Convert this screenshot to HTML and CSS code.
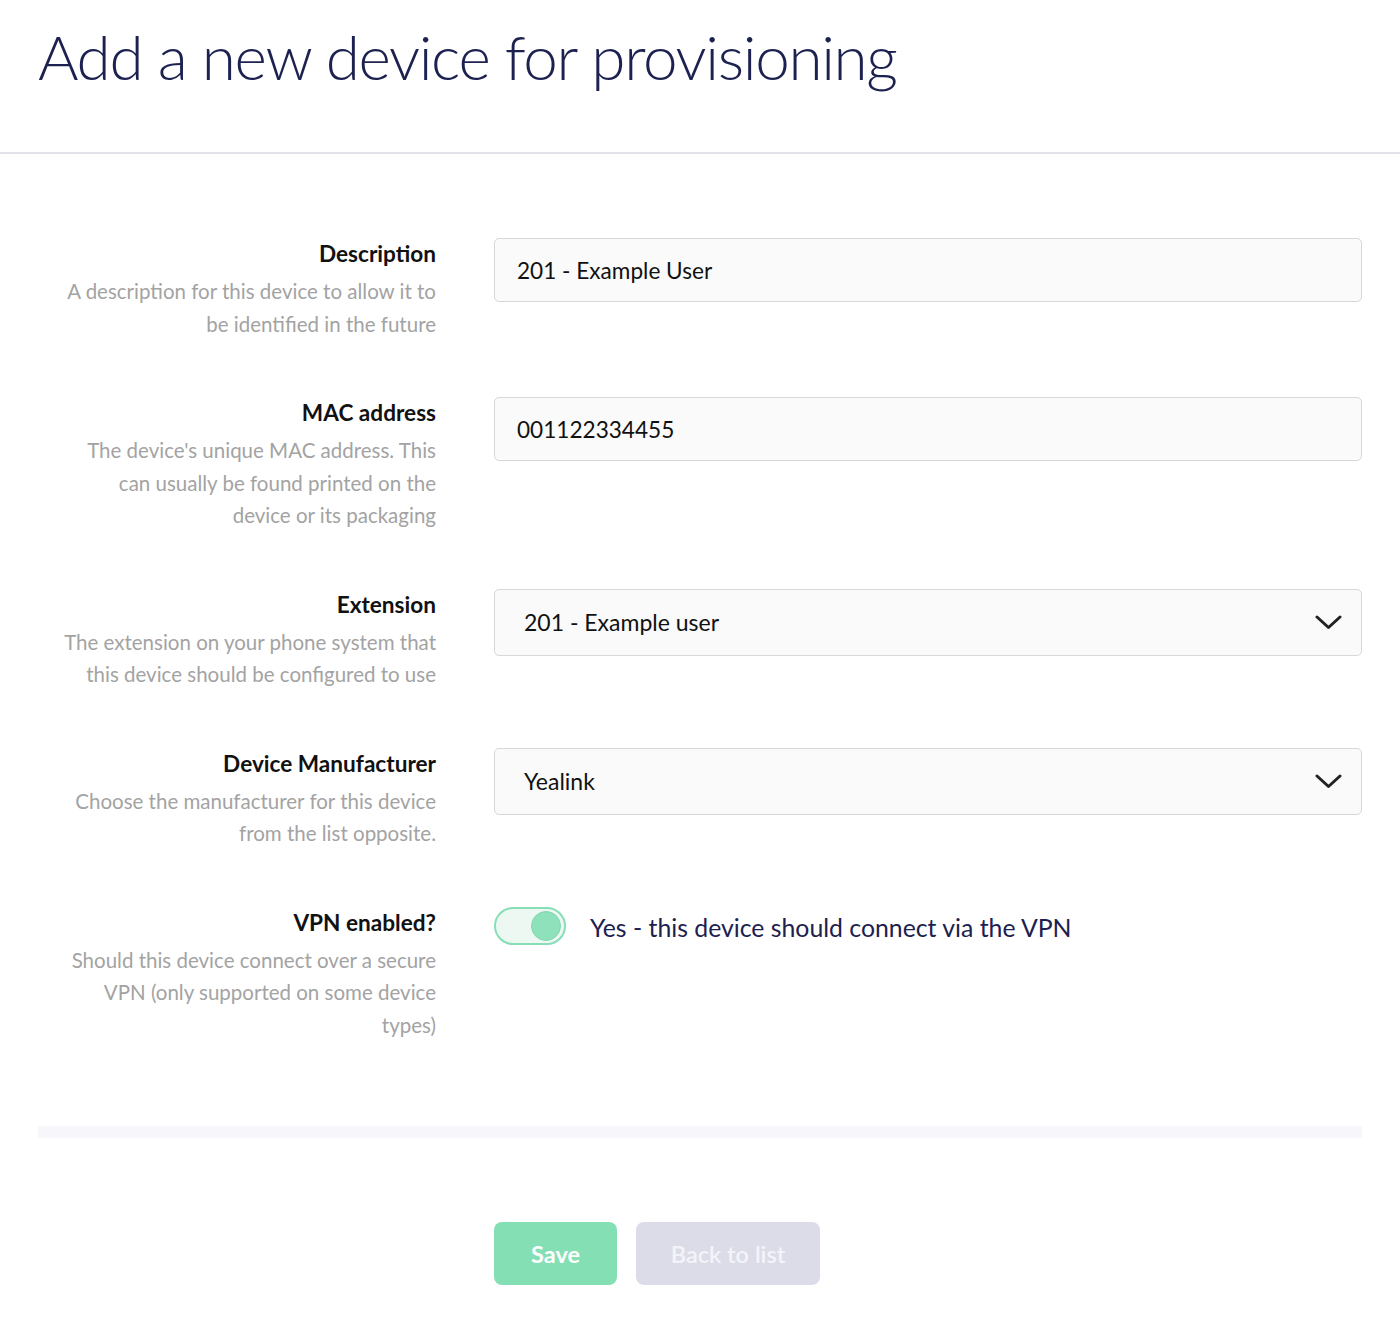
FILE: index.html
```html
<!DOCTYPE html>
<html lang="en">
<head>
<meta charset="utf-8">
<title>Add a new device for provisioning</title>
<link rel="stylesheet" href="styles.css">
</head>
<body>
<header class="page-header">
  <h1 class="page-title">Add a new device for provisioning</h1>
</header>
<main class="page-body">
  <form class="device-form">
    <div class="form-row">
      <div class="field-info">
        <label class="field-label" for="desc">Description</label>
        <p class="field-help">A description for this device to allow it to<br>be identified in the future</p>
      </div>
      <div class="field-control">
        <input class="text-input" id="desc" type="text" value="201 - Example User">
      </div>
    </div>
    <div class="form-row">
      <div class="field-info">
        <label class="field-label" for="mac">MAC address</label>
        <p class="field-help">The device's unique MAC address. This<br>can usually be found printed on the<br>device or its packaging</p>
      </div>
      <div class="field-control">
        <input class="text-input" id="mac" type="text" value="001122334455">
      </div>
    </div>
    <div class="form-row">
      <div class="field-info">
        <label class="field-label">Extension</label>
        <p class="field-help">The extension on your phone system that<br>this device should be configured to use</p>
      </div>
      <div class="field-control">
        <div class="select-box">
          <span class="select-value">201 - Example user</span>
          <svg class="chevron" width="27" height="15" viewBox="0 0 27 15"><path d="M2 2 L13.5 12.5 L25 2" fill="none" stroke="#222" stroke-width="3" stroke-linecap="round" stroke-linejoin="round"/></svg>
        </div>
      </div>
    </div>
    <div class="form-row">
      <div class="field-info">
        <label class="field-label">Device Manufacturer</label>
        <p class="field-help">Choose the manufacturer for this device<br>from the list opposite.</p>
      </div>
      <div class="field-control">
        <div class="select-box">
          <span class="select-value">Yealink</span>
          <svg class="chevron" width="27" height="15" viewBox="0 0 27 15"><path d="M2 2 L13.5 12.5 L25 2" fill="none" stroke="#222" stroke-width="3" stroke-linecap="round" stroke-linejoin="round"/></svg>
        </div>
      </div>
    </div>
    <div class="form-row">
      <div class="field-info">
        <label class="field-label">VPN enabled?</label>
        <p class="field-help">Should this device connect over a secure<br>VPN (only supported on some device<br>types)</p>
      </div>
      <div class="field-control toggle-row">
        <span class="toggle"><span class="toggle-knob"></span></span>
        <span class="toggle-text">Yes - this device should connect via the VPN</span>
      </div>
    </div>
  </form>
  <div class="divider-band"></div>
  <div class="actions">
    <button class="btn btn-save" type="button">Save</button>
    <button class="btn btn-back" type="button">Back to list</button>
  </div>
</main>
</body>
</html>
```
FILE: styles.css
```css
* { box-sizing: border-box; }
html, body { margin: 0; padding: 0; background: #fff; }
body { font-family: "Lato", "Liberation Sans", sans-serif; color: #111; }

.page-header {
  height: 154px;
  padding: 16px 38px 0;
  border-bottom: 2px solid #e2e2ea;
}
.page-title {
  margin: 0;
  font-size: 62px;
  font-weight: 300;
  line-height: 80px;
  color: #1c2150;
  letter-spacing: -1.35px;
  white-space: nowrap;
}

.page-body { padding: 0 38px; }

.device-form {
  display: flex;
  flex-direction: column;
  gap: 57px;
  padding-top: 84px;
}
.form-row {
  display: grid;
  grid-template-columns: 398px 1fr;
  column-gap: 58px;
}
.field-info { text-align: right; }
.field-label {
  display: block;
  font-size: 22.6px;
  font-weight: 700;
  line-height: 32px;
  color: #111;
}
.field-help {
  margin: 5px 0 0;
  font-size: 20.5px;
  line-height: 32.5px;
  color: #a3a3a3;
  white-space: nowrap;
}

.text-input {
  display: block;
  width: 100%;
  height: 64px;
  padding: 0 22px;
  border: 1px solid #d8d8d8;
  border-radius: 5px;
  background: #fafafa;
  font-family: inherit;
  font-size: 22.6px;
  color: #111;
  outline: none;
}
.select-box {
  display: flex;
  align-items: center;
  justify-content: space-between;
  height: 67px;
  padding: 0 19px 0 29px;
  border: 1px solid #d8d8d8;
  border-radius: 5px;
  background: #fafafa;
}
.select-value { font-size: 23px; color: #111; }
.chevron { display: block; }

.toggle-row {
  display: flex;
  align-items: center;
  gap: 24px;
  height: 38px;
}
.toggle {
  display: flex;
  align-items: center;
  justify-content: flex-end;
  width: 72px;
  height: 38px;
  padding: 0 3px;
  border: 2px solid #86dfb6;
  border-radius: 19px;
  background: #eef8f3;
}
.toggle-knob {
  width: 30px;
  height: 30px;
  border-radius: 50%;
  background: #8fe1bb;
  border: 1px solid #7fd8ae;
}
.toggle-text {
  font-size: 24.8px;
  color: #1c2150;
  padding-top: 3px;
}

.divider-band {
  height: 12px;
  margin-top: 85px;
  background: #f7f7fb;
}

.actions {
  display: flex;
  gap: 19px;
  padding: 84px 0 0 456px;
}
.btn {
  height: 63px;
  border: none;
  border-radius: 8px;
  font-family: inherit;
  font-size: 23.5px;
  font-weight: 700;
  color: #fff;
}
.btn-save { width: 123px; background: #84dfb4; }
.btn-back { width: 184px; background: #dbdce8; color: #f4f4f8; font-weight: 600; }
```
